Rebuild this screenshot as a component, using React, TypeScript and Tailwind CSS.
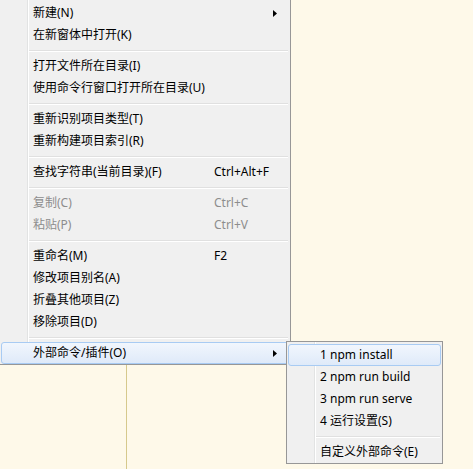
import React from 'react';

type Entry =
  | { sep: true }
  | { label: string; shortcut?: string; disabled?: boolean; sub?: boolean; active?: boolean };

const mainItems: Entry[] = [
  { label: '新建(N)', sub: true },
  { label: '在新窗体中打开(K)' },
  { sep: true },
  { label: '打开文件所在目录(I)' },
  { label: '使用命令行窗口打开所在目录(U)' },
  { sep: true },
  { label: '重新识别项目类型(T)' },
  { label: '重新构建项目索引(R)' },
  { sep: true },
  { label: '查找字符串(当前目录)(F)', shortcut: 'Ctrl+Alt+F' },
  { sep: true },
  { label: '复制(C)', shortcut: 'Ctrl+C', disabled: true },
  { label: '粘贴(P)', shortcut: 'Ctrl+V', disabled: true },
  { sep: true },
  { label: '重命名(M)', shortcut: 'F2' },
  { label: '修改项目别名(A)' },
  { label: '折叠其他项目(Z)' },
  { label: '移除项目(D)' },
  { sep: true },
  { label: '外部命令/插件(O)', sub: true, active: true },
];

const subItems: Entry[] = [
  { label: '1 npm install', active: true },
  { label: '2 npm run build' },
  { label: '3 npm run serve' },
  { label: '4 运行设置(S)' },
  { sep: true },
  { label: '自定义外部命令(E)' },
];

const Arrow = () => (
  <svg width="4" height="7" viewBox="0 0 4 7" className="block">
    <path d="M0 0 L4 3.5 L0 7 Z" fill="#000" />
  </svg>
);

const Menu: React.FC<{ items: Entry[]; labelWidth: string; className: string }> = ({
  items,
  labelWidth,
  className,
}) => (
  <div
    className={`flex flex-col bg-[#f0f0f0] bg-[linear-gradient(to_right,#f0f0f0_27px,#e2e3e3_27px,#e2e3e3_28px,#ffffff_28px,#ffffff_29px,#f0f0f0_29px)] border border-[#979797] ${className}`}
  >
    {items.map((it, i) =>
      'sep' in it ? (
        <div key={i} className="h-[9px] flex flex-col pt-[4px] pl-[29px] pr-[2px]">
          <div className="h-px bg-[#e0e0e0]" />
          <div className="h-px bg-white" />
        </div>
      ) : (
        <div
          key={i}
          className={`mx-[1px] h-[22px] flex items-center rounded-[3px] border ${
            it.active
              ? 'border-[#a8cbf3] bg-[linear-gradient(to_bottom,#f1f6fd,#dfeaf9)]'
              : 'border-transparent'
          }`}
        >
          <span
            className={`pl-[31px] whitespace-nowrap ${labelWidth} ${
              it.disabled ? 'text-[#8d8d8d]' : 'text-black'
            }`}
          >
            {it.label}
          </span>
          {it.shortcut && (
            <span className={`whitespace-nowrap ${it.disabled ? 'text-[#8d8d8d]' : 'text-black'}`}>
              {it.shortcut}
            </span>
          )}
          {it.sub && (
            <span className="ml-auto pr-[11px]">
              <Arrow />
            </span>
          )}
        </div>
      )
    )}
  </div>
);

export default function App() {
  return (
    <div
      className="relative w-[473px] h-[469px] overflow-hidden bg-[#fef9e9] text-[12px] leading-none"
      style={{ fontFamily: '"Noto Sans", "Noto Sans CJK SC", sans-serif' }}
    >
      <div className="flex h-full">
        <div className="w-[127px] h-full border-r border-[#d6c98c]" />
      </div>

      {/* main context menu, top/left edges lie outside the view */}
      <Menu
        items={mainItems}
        labelWidth="w-[212px]"
        className="absolute left-[-1px] top-[-1px] w-[292px] pt-[2px] pb-0"
      />

      {/* submenu */}
      <Menu
        items={subItems}
        labelWidth="w-auto"
        className="absolute left-[286px] top-[341px] w-[157px] pt-[2px] pb-0"
      />
    </div>
  );
}
